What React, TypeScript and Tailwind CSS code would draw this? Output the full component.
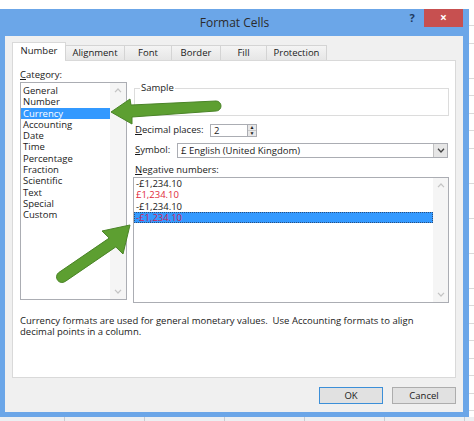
import React from 'react'

const categories = [
  'General',
  'Number',
  'Currency',
  'Accounting',
  'Date',
  'Time',
  'Percentage',
  'Fraction',
  'Scientific',
  'Text',
  'Special',
  'Custom',
]

const tabs = [
  { label: 'Number', width: 'w-[54px]', active: true },
  { label: 'Alignment', width: 'w-[60px]', active: false },
  { label: 'Font', width: 'w-[48px]', active: false },
  { label: 'Border', width: 'w-[50px]', active: false },
  { label: 'Fill', width: 'w-[47px]', active: false },
  { label: 'Protection', width: 'w-[61px]', active: false },
]

const negatives = [
  { text: '-£1,234.10', red: false, selected: false },
  { text: '£1,234.10', red: true, selected: false },
  { text: '-£1,234.10', red: false, selected: false },
  { text: '-£1,234.10', red: true, selected: true },
]

function Chevron({ up }: { up?: boolean }) {
  return (
    <svg width="8" height="5" viewBox="0 0 8 5" className="block">
      <path
        d={up ? 'M1 4.2 L4 1 L7 4.2' : 'M1 0.8 L4 4 L7 0.8'}
        fill="none"
        stroke="#c4c4c4"
        strokeWidth="1.2"
      />
    </svg>
  )
}

function Scrollbar({ width }: { width: string }) {
  return (
    <div className={`${width} h-full bg-[#f5f5f5] flex flex-col items-center justify-between py-[5px]`}>
      <Chevron up />
      <Chevron />
    </div>
  )
}

function Arrows() {
  return (
    <svg
      width="474"
      height="421"
      viewBox="0 0 474 421"
      className="absolute left-0 top-0 pointer-events-none"
    >
      <path
        d="M216,101 L131,105 L130,99 L111,112 L132,124 L132,117 L216,111 A5,5 0 0 0 216,101 Z"
        fill="#5d9f31"
        stroke="#4a8427"
        strokeWidth="1"
        strokeLinejoin="round"
      />
      <path
        d="M109.2,238.1 L102,231 L130,225 L123,254 L115.8,246.9 L65.3,281.4 A5.5,5.5 0 0 1 58.7,272.6 Z"
        fill="#5d9f31"
        stroke="#4a8427"
        strokeWidth="1"
        strokeLinejoin="round"
      />
    </svg>
  )
}

export default function App() {
  return (
    <div className="relative w-[474px] h-[421px] overflow-hidden bg-white flex flex-col font-['Open_Sans',sans-serif] text-[9.5px] text-[#1a1a1a]">
      <div className="h-[9px] shrink-0" />

      <div className="flex shrink-0">
        {/* Dialog */}
        <div className="w-[469px] h-[408px] bg-[#6ba6e8] flex flex-col">
          {/* Title bar */}
          <div className="h-[27px] flex items-start">
            <div className="flex-1 pl-[69px] text-center text-[12px] leading-[27px] text-[#2b2b2b]">
              Format Cells
            </div>
            <div className="w-[63px] mr-[6px] flex items-start">
              <div className="w-[24px] h-[18px] flex items-center justify-center text-[11px] font-bold text-[#1f3a5f]">
                ?
              </div>
              <div className="w-[39px] h-[18px] bg-[#c75050] flex items-center justify-center text-[12px] font-bold text-white leading-none">
                ×
              </div>
            </div>
          </div>

          {/* Body */}
          <div className="ml-[5px] mr-[6px] h-[376px] bg-[#f0f0f0] pl-[7px] pr-[7px] pt-[6px]">
            {/* Tabs */}
            <div className="flex items-end h-[19px] relative z-10">
              {tabs.map((tab) =>
                tab.active ? (
                  <div
                    key={tab.label}
                    className={`${tab.width} h-[19px] bg-white border border-b-0 border-[#d9d9d9] flex items-center justify-center pb-[1px]`}
                  >
                    {tab.label}
                  </div>
                ) : (
                  <div
                    key={tab.label}
                    className={`${tab.width} -ml-px h-[15px] mb-px bg-gradient-to-b from-[#f4f4f4] to-[#e6e6e6] border border-b-0 border-[#d4d4d4] flex items-center justify-center`}
                  >
                    {tab.label}
                  </div>
                )
              )}
            </div>

            {/* Tab panel */}
            <div className="-mt-px w-[444px] h-[318px] bg-white border border-[#d9d9d9]">
              <div className="flex">
                {/* Category */}
                <div className="pl-[7px] pt-[8px]">
                  <div className="h-[12px] leading-[12px]">
                    <span className="underline">C</span>ategory:
                  </div>
                  <div className="mt-px w-[107px] h-[218px] border border-[#abadb3] flex">
                    <div className="w-[89px] pt-[2px]">
                      {categories.map((c) => (
                        <div
                          key={c}
                          className={`h-[11.3px] leading-[11.3px] pl-[2px] ${
                            c === 'Currency' ? 'bg-[#3399ff] text-white' : ''
                          }`}
                        >
                          {c}
                        </div>
                      ))}
                    </div>
                    <Scrollbar width="w-[16px]" />
                  </div>
                </div>

                {/* Right column */}
                <div className="ml-[6px] w-[316px] pt-[21px]">
                  <fieldset className="ml-px w-[315px] h-[34px] border border-[#dcdcdc] px-[5px]">
                    <legend className="px-[1px] h-[12px] leading-[12px]">Sample</legend>
                  </fieldset>

                  <div className="mt-[8px] h-[13px] flex items-center pl-[2px]">
                    <div className="w-[75px]">
                      <span className="underline">D</span>ecimal places:
                    </div>
                    <div className="w-[38px] h-[13px] border border-[#abadb3] bg-white leading-[11px] pl-[3px]">
                      2
                    </div>
                    <div className="w-[9px] h-[13px] flex flex-col border border-l-0 border-[#abadb3]">
                      <div className="flex-1 bg-[#e8e8e8] border-b border-[#c8c8c8] flex items-center justify-center text-[5px] leading-none">
                        ▲
                      </div>
                      <div className="flex-1 bg-[#e8e8e8] flex items-center justify-center text-[5px] leading-none">
                        ▼
                      </div>
                    </div>
                  </div>

                  <div className="mt-[6px] h-[15px] flex items-center pl-[2px]">
                    <div className="w-[42px]">
                      <span className="underline">S</span>ymbol:
                    </div>
                    <div className="w-[271px] h-[15px] border border-[#abadb3] flex">
                      <div className="flex-1 leading-[13px] pl-[3px]">£ English (United Kingdom)</div>
                      <div className="w-[14px] bg-[#e6e6e6] border-l border-[#c2c2c2] flex items-center justify-center">
                        <svg width="8" height="5" viewBox="0 0 8 5" className="block">
                          <path d="M1 0.8 L4 4 L7 0.8" fill="none" stroke="#444" strokeWidth="1.3" />
                        </svg>
                      </div>
                    </div>
                  </div>

                  <div className="mt-[6px] h-[12px] leading-[12px] pl-[2px]">
                    <span className="underline">N</span>egative numbers:
                  </div>

                  <div className="mt-px w-[316px] h-[126px] border border-[#abadb3] flex">
                    <div className="flex-1">
                      {negatives.map((n, i) => (
                        <div
                          key={i}
                          className={`h-[11.3px] leading-[10px] pl-[1px] ${
                            n.selected
                              ? 'bg-[#3399ff] border border-dotted border-[#2a4d7a] text-[#c8245a]'
                              : n.red
                              ? 'text-[#e0283a] border border-transparent'
                              : 'border border-transparent'
                          }`}
                        >
                          {n.text}
                        </div>
                      ))}
                    </div>
                    <Scrollbar width="w-[15px]" />
                  </div>
                </div>
              </div>

              <div className="pl-[7px] mt-[12px] leading-[11.3px]">
                <div>Currency formats are used for general monetary values.&nbsp; Use Accounting formats to align</div>
                <div>decimal points in a column.</div>
              </div>
            </div>

            {/* Buttons */}
            <div className="mt-[9px] flex justify-end gap-[9px]">
              <button className="w-[64px] h-[17px] bg-[#e1e1e1] border border-[#3c8fd8] leading-none">
                OK
              </button>
              <button className="w-[64px] h-[17px] bg-[#e1e1e1] border border-[#adadad] leading-none">
                Cancel
              </button>
            </div>
          </div>
        </div>

        {/* Spreadsheet to the right */}
        <div className="flex-1 h-[408px] bg-[repeating-linear-gradient(180deg,#ffffff_0px,#ffffff_16.5px,#dadada_16.5px,#dadada_17.5px)]" />
      </div>

      {/* Spreadsheet below */}
      <div className="flex-1 bg-[#eceff2] bg-[repeating-linear-gradient(90deg,transparent_0px,transparent_64px,#c8ccd2_64px,#c8ccd2_65px,transparent_65px,transparent_80px)]" />

      <Arrows />
    </div>
  )
}
